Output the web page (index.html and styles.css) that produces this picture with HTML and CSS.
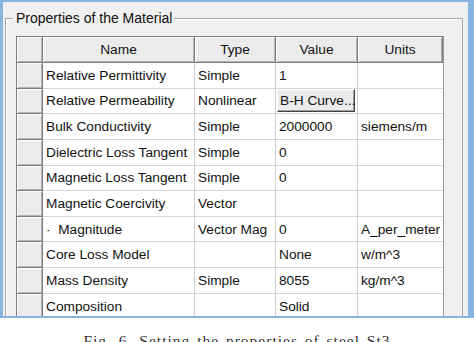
FILE: index.html
```html
<!DOCTYPE html>
<html lang="en">
<head>
    <meta charset="UTF-8">
    <title>Properties of the Material</title>
    <link rel="stylesheet" href="styles.css">
</head>
<body>
    <div class="window">
        <fieldset class="group">
            <legend>Properties of the Material</legend>
            <div class="grid">
                <div class="hd corner"></div>
                <div class="hd">Name</div>
                <div class="hd">Type</div>
                <div class="hd">Value</div>
                <div class="hd">Units</div>

                <div class="rh"></div>
                <div class="cell">Relative Permittivity</div>
                <div class="cell">Simple</div>
                <div class="cell">1</div>
                <div class="cell"></div>

                <div class="rh"></div>
                <div class="cell">Relative Permeability</div>
                <div class="cell">Nonlinear</div>
                <div class="cell btn-cell"><button class="curve-btn">B-H Curve...</button></div>
                <div class="cell"></div>

                <div class="rh"></div>
                <div class="cell">Bulk Conductivity</div>
                <div class="cell">Simple</div>
                <div class="cell">2000000</div>
                <div class="cell">siemens/m</div>

                <div class="rh"></div>
                <div class="cell">Dielectric Loss Tangent</div>
                <div class="cell">Simple</div>
                <div class="cell">0</div>
                <div class="cell"></div>

                <div class="rh"></div>
                <div class="cell">Magnetic Loss Tangent</div>
                <div class="cell">Simple</div>
                <div class="cell">0</div>
                <div class="cell"></div>

                <div class="rh"></div>
                <div class="cell">Magnetic Coercivity</div>
                <div class="cell">Vector</div>
                <div class="cell"></div>
                <div class="cell"></div>

                <div class="rh"></div>
                <div class="cell">&middot;&nbsp;&nbsp;Magnitude</div>
                <div class="cell">Vector Mag</div>
                <div class="cell">0</div>
                <div class="cell">A_per_meter</div>

                <div class="rh"></div>
                <div class="cell">Core Loss Model</div>
                <div class="cell"></div>
                <div class="cell">None</div>
                <div class="cell">w/m^3</div>

                <div class="rh"></div>
                <div class="cell">Mass Density</div>
                <div class="cell">Simple</div>
                <div class="cell">8055</div>
                <div class="cell">kg/m^3</div>

                <div class="rh"></div>
                <div class="cell">Composition</div>
                <div class="cell"></div>
                <div class="cell">Solid</div>
                <div class="cell"></div>
            </div>
        </fieldset>
    </div>
    <p class="caption">Fig. 6. Setting the properties of steel St3</p>
</body>
</html>
```

FILE: styles.css
```css
* {
    box-sizing: border-box;
}

body {
    margin: 0;
    width: 474px;
    height: 342px;
    overflow: hidden;
    background: #fff;
    font-family: "Liberation Sans", Arial, sans-serif;
    font-size: 13.7px;
    color: #111;
}

/* Dialog frame */
.window {
    height: 318px;
    overflow: hidden;
    background: #f0f0f0;
    border-style: solid;
    border-color: #88b4e0;
    border-width: 2px 6px 2px 3px;
    padding: 8px 0 0 2px;
}

.group {
    width: 458px;
    margin: 0;
    padding: 10px 0 0 10px;
    border: 1px solid #a6a6a6;
    box-shadow: inset 1px 1px 0 #fff;
}

.group legend {
    margin-left: -3px;
    padding: 0 2px 0 3px;
    line-height: 16px;
    font-size: 14px;
    background: #f0f0f0;
}

/* Property grid */
.grid {
    display: grid;
    width: 428px;
    grid-template-columns: 26px 152px 81px 82px 85px;
    grid-template-rows: 26px;
    grid-auto-rows: 25.65px;
    border-top: 1px solid #7c7c7c;
    border-left: 1px solid #7c7c7c;
    border-right: 1px solid #9a9a9a;
}

.hd,
.rh {
    background: #ebebeb;
    border-right: 1px solid #7c7c7c;
    border-bottom: 1px solid #7c7c7c;
    box-shadow: inset 1px 1px 0 #fff, inset -1px -1px 0 #b4b4b4;
}

.hd {
    display: flex;
    align-items: center;
    justify-content: center;
}

.cell {
    display: flex;
    align-items: center;
    padding-left: 3px;
    white-space: nowrap;
    background: #fff;
    border-right: 1px solid #cfcfcf;
    border-bottom: 1px solid #d6d6d6;
}

.cell:nth-child(5n) {
    border-right: none;
}

.btn-cell {
    align-items: flex-start;
    padding: 0 0 0 1px;
}

.curve-btn {
    width: 78px;
    height: 23px;
    margin: 0;
    padding: 0 0 0 2px;
    text-align: left;
    font: inherit;
    color: #111;
    background: #ebebeb;
    border: 1px solid;
    border-color: #fff #404040 #404040 #fff;
    box-shadow: inset -1px -1px 0 #a0a0a0;
}

.caption {
    margin: 14px 0 0;
    text-align: center;
    font-family: "Liberation Serif", "Times New Roman", serif;
    font-size: 15.5px;
    line-height: 18px;
    letter-spacing: 1px;
    word-spacing: 2px;
    color: #333;
}
```
